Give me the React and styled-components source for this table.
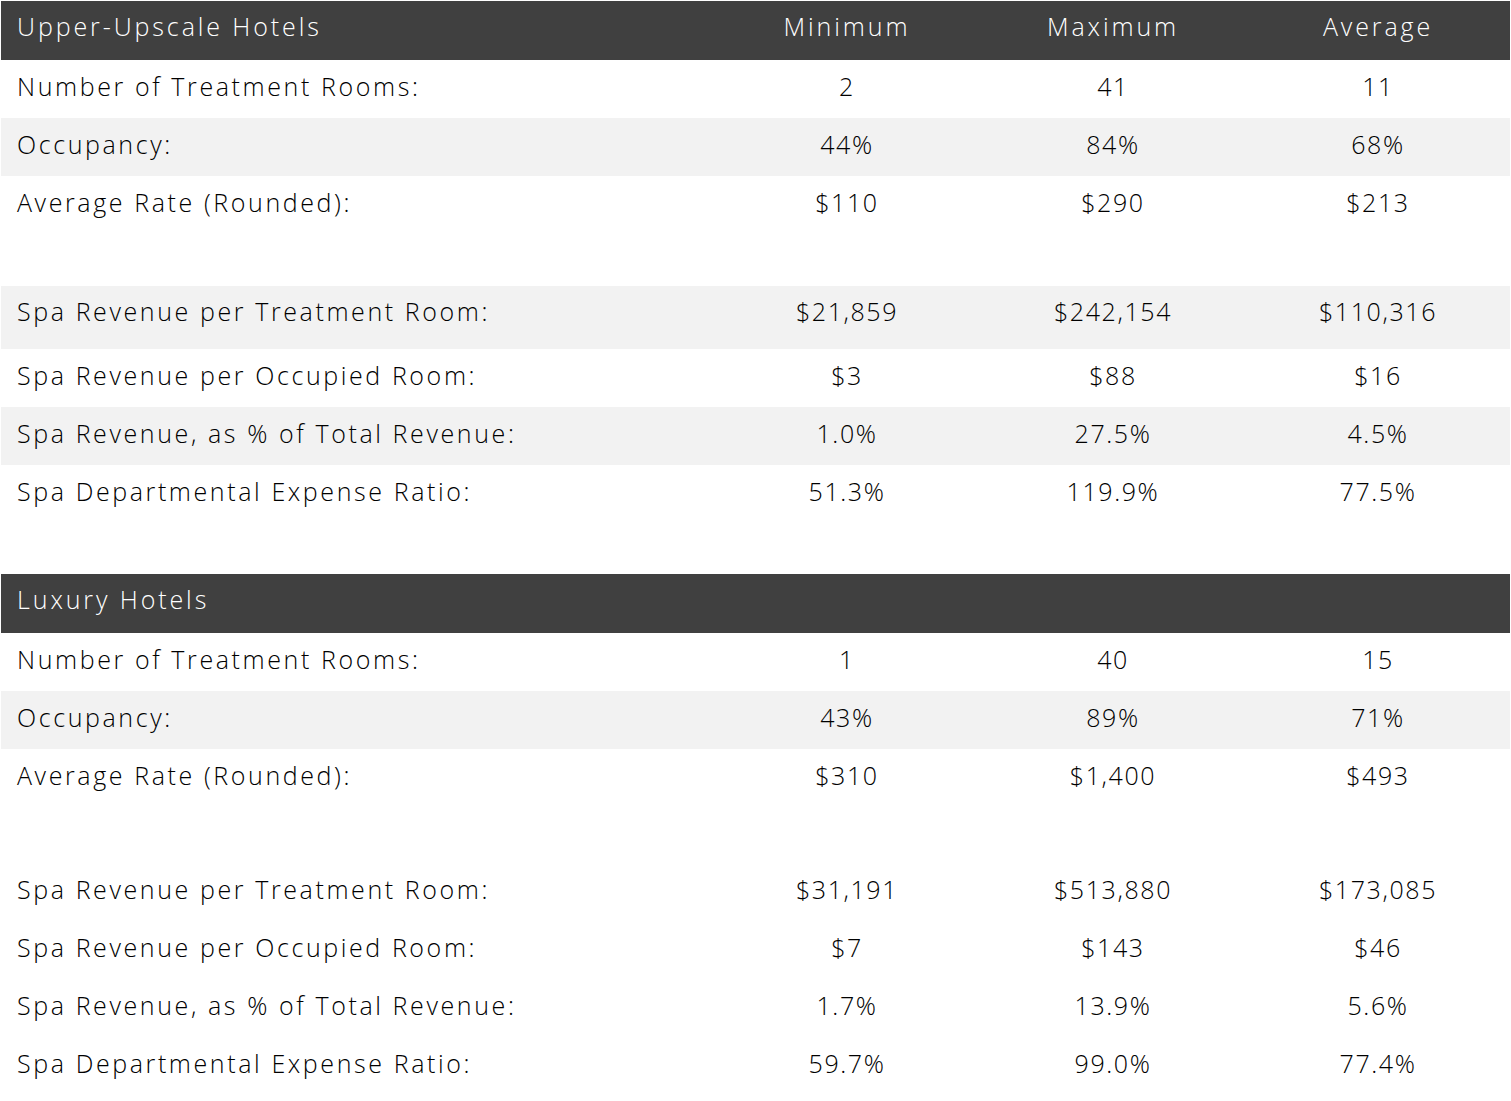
import React from "react";
import styled, { createGlobalStyle } from "styled-components";

const GlobalStyle = createGlobalStyle`
  html, body {
    margin: 0;
    padding: 0;
    background: #ffffff;
  }
  body {
    font-family: "Open Sans", "Lato", sans-serif;
  }
`;

const sections = [
  {
    title: "Upper-Upscale Hotels",
    showCols: true,
    striped: true,
    rows: [
      { label: "Number of Treatment Rooms:", values: ["2", "41", "11"] },
      { label: "Occupancy:", values: ["44%", "84%", "68%"] },
      { label: "Average Rate (Rounded):", values: ["$110", "$290", "$213"] },
      { spacer: true, height: 52 },
      { label: "Spa Revenue per Treatment Room:", values: ["$21,859", "$242,154", "$110,316"], height: 63, top: true },
      { label: "Spa Revenue per Occupied Room:", values: ["$3", "$88", "$16"] },
      { label: "Spa Revenue, as % of Total Revenue:", values: ["1.0%", "27.5%", "4.5%"] },
      { label: "Spa Departmental Expense Ratio:", values: ["51.3%", "119.9%", "77.5%"] },
      { spacer: true, height: 51 },
    ],
  },
  {
    title: "Luxury Hotels",
    showCols: false,
    rows: [
      { label: "Number of Treatment Rooms:", values: ["1", "40", "15"], shade: false },
      { label: "Occupancy:", values: ["43%", "89%", "71%"], shade: true },
      { label: "Average Rate (Rounded):", values: ["$310", "$1,400", "$493"], shade: false },
      { spacer: true, height: 56 },
      { label: "Spa Revenue per Treatment Room:", values: ["$31,191", "$513,880", "$173,085"] },
      { label: "Spa Revenue per Occupied Room:", values: ["$7", "$143", "$46"] },
      { label: "Spa Revenue, as % of Total Revenue:", values: ["1.7%", "13.9%", "5.6%"] },
      { label: "Spa Departmental Expense Ratio:", values: ["59.7%", "99.0%", "77.4%"] },
    ],
  },
];

const columns = ["Minimum", "Maximum", "Average"];

const App = () => {
  return (
    <Page>
      <GlobalStyle />
      {sections.map((section) => {
        let stripe = 0;
        return (
          <Section key={section.title}>
            <HeaderRow>
              <HeaderLabel>{section.title}</HeaderLabel>
              {columns.map((c) => (
                <HeaderCell key={c}>{section.showCols ? c : ""}</HeaderCell>
              ))}
            </HeaderRow>
            {section.rows.map((row, i) => {
              if (row.spacer) return <Spacer key={i} $h={row.height} />;
              let shade = false;
              if (section.striped) {
                shade = stripe % 2 === 1;
                stripe += 1;
              } else if (row.shade) {
                shade = true;
              }
              return (
                <Row key={i} $shade={shade} $h={row.height || 58} $top={row.top}>
                  <Label>{row.label}</Label>
                  {row.values.map((v, j) => (
                    <Value key={j}>{v}</Value>
                  ))}
                </Row>
              );
            })}
          </Section>
        );
      })}
    </Page>
  );
};

export default App;

const Page = styled.div`
  padding: 1px 1px 0 1px;
  width: 1509px;
  color: #000000;
`;

const Section = styled.div`
  display: flex;
  flex-direction: column;
`;

const HeaderRow = styled.div`
  display: grid;
  grid-template-columns: 713px 266px 266px 264px;
  align-items: center;
  height: 59px;
  background: #404040;
  color: #ffffff;
  font-size: 25px;
  font-weight: 300;
`;

const HeaderLabel = styled.div`
  padding-left: 16px;
  padding-bottom: 9px;
  letter-spacing: 2.9px;
`;

const HeaderCell = styled.div`
  text-align: center;
  padding-bottom: 9px;
  letter-spacing: 2.9px;
`;

const Row = styled.div`
  display: grid;
  grid-template-columns: 713px 266px 266px 264px;
  align-items: ${(p) => (p.$top ? "start" : "center")};
  height: ${(p) => p.$h}px;
  background: ${(p) => (p.$shade ? "#f2f2f2" : "#ffffff")};
  font-size: 25px;
  font-weight: 300;
  padding-top: ${(p) => (p.$top ? "8px" : "0")};
  box-sizing: border-box;
`;

const Label = styled.div`
  padding-left: 16px;
  padding-bottom: 7px;
  letter-spacing: 2.6px;
`;

const Value = styled.div`
  text-align: center;
  padding-bottom: 7px;
  letter-spacing: 1.6px;
`;

const Spacer = styled.div`
  height: ${(p) => p.$h}px;
`;
